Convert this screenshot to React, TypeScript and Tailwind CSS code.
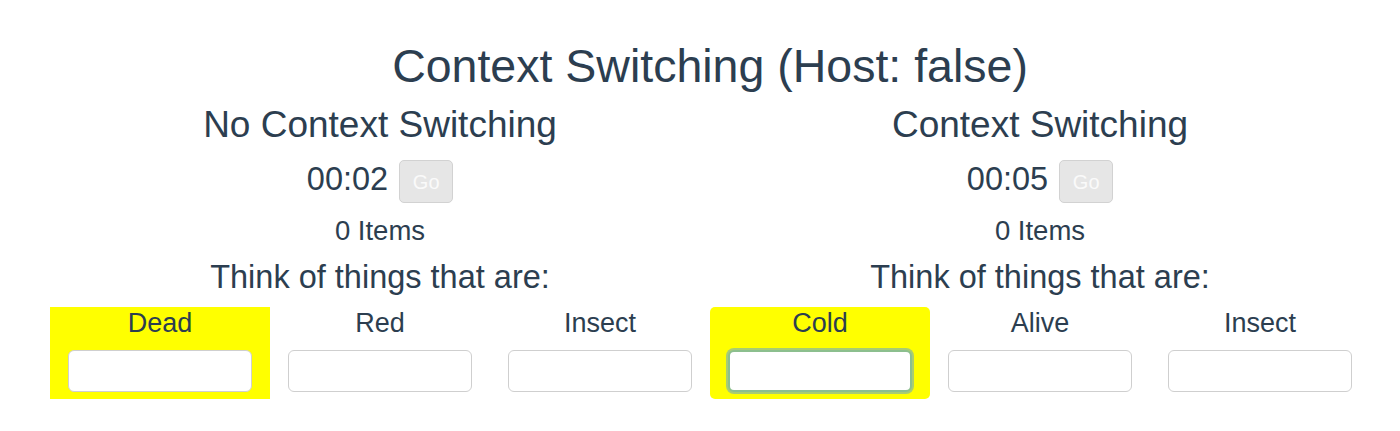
import React from "react";

type Cell = { label: string; highlight?: boolean; focused?: boolean; rounded?: boolean };

function Half({ title, time, cells }: { title: string; time: string; cells: Cell[] }) {
  return (
    <div className="flex w-[660px] flex-col items-center">
      <div className="h-[62px] text-[37px] leading-[62px]">{title}</div>
      <div className="mt-[4px] flex h-[43px] items-start gap-[11px]">
        <span className="text-[32.5px] leading-[38px]">{time}</span>
        <button className="h-[43px] w-[54px] rounded-[5px] border border-[#d2d2d2] bg-[#e6e6e6] text-[20px] text-[#fafafa]">
          Go
        </button>
      </div>
      <div className="mt-[8px] h-[39px] text-[27.5px] leading-[39px]">0 Items</div>
      <div className="h-[55px] text-[32.5px] leading-[55px]">Think of things that are:</div>
      <div className="mt-[2px] flex w-full">
        {cells.map((c, i) => (
          <div
            key={i}
            className={
              "flex h-[92px] w-[220px] flex-col items-center px-[18px] " +
              (c.highlight ? "bg-[#ffff00] " : "") +
              (c.rounded ? "rounded-[5px]" : "")
            }
          >
            <div className="h-[32px] text-[27px] leading-[32px]">{c.label}</div>
            <input
              className={
                "mt-[11px] h-[42px] w-full rounded-[6px] bg-white outline-none " +
                (c.focused
                  ? "border-[2px] border-[#8cbf8e] shadow-[0_0_0_2px_#a9cc72]"
                  : "border border-[#cfcfcf]")
              }
            />
          </div>
        ))}
      </div>
    </div>
  );
}

export default function App() {
  return (
    <div
      className="min-h-[431px] w-[1400px] bg-white pl-[50px] pt-[38px] text-[#2c3e50]"
      style={{ fontFamily: '"Liberation Sans", Arial, sans-serif' }}
    >
      <div className="flex w-[1320px] flex-col items-center">
        <div className="h-[56px] text-[46.5px] leading-[56px]">Context Switching (Host: false)</div>
        <div className="flex w-full">
          <Half
            title="No Context Switching"
            time="00:02"
            cells={[{ label: "Dead", highlight: true }, { label: "Red" }, { label: "Insect" }]}
          />
          <Half
            title="Context Switching"
            time="00:05"
            cells={[
              { label: "Cold", highlight: true, focused: true, rounded: true },
              { label: "Alive" },
              { label: "Insect" },
            ]}
          />
        </div>
      </div>
    </div>
  );
}
